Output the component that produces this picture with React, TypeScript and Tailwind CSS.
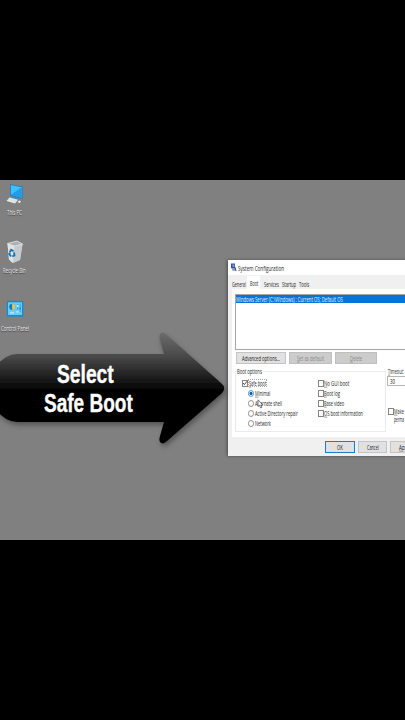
import { useLayoutEffect, useRef } from "react";

// Narrow label: the text is squeezed horizontally to the given width
function Label({ text, width, className = "", hotkey = false }: { text: string; width: number; className?: string; hotkey?: boolean }) {
  const ref = useRef<HTMLSpanElement>(null);
  useLayoutEffect(() => {
    const el = ref.current;
    if (el) el.style.transform = `translateY(0.6px) scaleX(${width / el.offsetWidth})`;
  }, [text, width]);
  return (
    <span className={`block shrink-0 whitespace-nowrap ${className}`} style={{ width }}>
      <span
        ref={ref}
        className={`inline-block origin-left align-top ${hotkey ? "first-letter:underline first-letter:decoration-[#999]" : ""}`}
      >
        {text}
      </span>
    </span>
  );
}

function Check({ text, width, checked = false }: { text: string; width: number; checked?: boolean }) {
  return (
    <div className="flex h-[10px] items-center">
      <span className="flex h-[7px] w-[6px] shrink-0 items-center justify-center border border-[#858585] bg-white">
        {checked && (
          <svg viewBox="0 0 6 6" className="h-[6px] w-[6px] shrink-0" fill="none" stroke="#222" strokeWidth="0.8">
            <path d="M1 3 L2.4 4.6 L5 1.2" />
          </svg>
        )}
      </span>
      <span className={checked ? "flex h-[8px] items-center border border-dotted border-[#aaa]" : "flex items-center"}>
        <Label text={text} width={width} hotkey />
      </span>
    </div>
  );
}

function Radio({ text, width, checked = false }: { text: string; width: number; checked?: boolean }) {
  return (
    <div className="flex h-[10px] items-center gap-[1px]">
      <svg viewBox="0 0 6 7" className="h-[7px] w-[6px] shrink-0">
        <ellipse cx="3" cy="3.5" rx="2.6" ry="3" fill="white" stroke={checked ? "#1275c7" : "#666"} strokeWidth="0.7" />
        {checked && <ellipse cx="3" cy="3.5" rx="1.5" ry="1.8" fill="#075fac" />}
      </svg>
      <Label text={text} width={width} hotkey={text === "Minimal"} />
    </div>
  );
}

function Arrow() {
  return (
    <svg viewBox="0 0 235 130" className="absolute top-[325px] left-0 h-[130px] w-[235px]">
      <defs>
        <linearGradient id="body" x1="0" y1="8" x2="0" y2="119" gradientUnits="userSpaceOnUse">
          <stop offset="0" stopColor="#6c6c6c" />
          <stop offset="0.2" stopColor="#4b4b4b" />
          <stop offset="0.49" stopColor="#090909" />
          <stop offset="0.53" stopColor="#000" />
        </linearGradient>
        <filter id="shadow" x="-10%" y="-10%" width="125%" height="125%">
          <feDropShadow dx="1.5" dy="3" stdDeviation="2.5" floodColor="#000" floodOpacity="0.35" />
        </filter>
      </defs>
      <path
        d="M17 29 H164 L159.5 13 Q158.8 8.5 162 7.8 Q164 7.5 167 10 L221.5 58.5 Q227 63 221.5 68.5 L167 116 Q163 120 160.5 117.5 Q158.5 115.5 160 111 L164 97 H17 Q6 97 -4 85 V41 Q6 29 17 29Z"
        fill="url(#body)"
        filter="url(#shadow)"
      />
    </svg>
  );
}

function PcIcon() {
  return (
    <svg viewBox="0 0 20 23" className="h-[23px] w-[20px]">
      <path d="M5 1 L17.5 3.5 V16 L5 12.5Z" fill="#137fc6" />
      <path d="M5.8 2 L16.8 4.2 V14.8 L5.8 11.7Z" fill="#43bdfb" />
      <path d="M16.8 4.2 L6 11.7 L16.8 14.8Z" fill="#219de8" />
      <path d="M8.5 13.5 L12 14.4 L14.2 17 L7 15.7Z" fill="#3b91bf" />
      <path d="M4.5 14.5 L13 16.7 L10 20.5 L1.5 18Z" fill="#e2e8eb" />
      <path d="M3.2 16.2 L11.5 18.5" stroke="#c3ccd0" strokeWidth="0.4" />
      <path d="M14 17.5 L16 18.2 L14.7 19.9 L12.7 19.2Z" fill="#edf1f3" />
    </svg>
  );
}

function BinIcon() {
  return (
    <svg viewBox="0 0 18 24" className="h-[24px] w-[18px]">
      <path d="M1.5 3.5 L11 1 L16.5 4 L14 20 L6.5 23 L3 19.5Z" fill="#d0d4d6" />
      <path d="M1.5 3.5 L8.5 6 L7 23 L3 19.5Z" fill="#e0e2e3" />
      <path d="M8.5 6 L16.5 4 L14 20 L7 23Z" fill="#c8cbcd" />
      <path d="M1.5 3.5 L11 1 L16.5 4 L8.5 6Z" fill="#aab0b3" stroke="#e9e9e9" strokeWidth="0.7" />
      <g fill="none" stroke="#1677bd" strokeWidth="1.9">
        <path d="M3.8 12.3 L5.1 9.8 L7.6 11.2" />
        <path d="M8 12.4 L8.5 15.5 L6.3 16.3" />
        <path d="M5.1 16.5 L3.2 14 L4 12.8" />
      </g>
    </svg>
  );
}

function PanelIcon() {
  return (
    <svg viewBox="0 0 18 18" className="h-[18px] w-[18px]">
      <rect x="0.7" y="0.8" width="16.6" height="15.8" fill="#168ad0" />
      <rect x="2" y="2.3" width="14" height="12.7" fill="#66cdf6" />
      <circle cx="6.2" cy="6.8" r="3.1" fill="#1680be" />
      <path d="M6.2 6.8 V3.7 A3.1 3.1 0 0 1 6.2 9.9Z" fill="#e6c55c" />
      <path d="M11.7 4 V10 M14.2 3.5 V12" stroke="#2b94cf" strokeWidth="0.8" />
      <path d="M4 12.8 H8 M10.2 11.8 H13" stroke="#bfeaff" strokeWidth="1.2" />
      <circle cx="11.7" cy="6" r="0.9" fill="#d9f3ff" />
      <circle cx="14.2" cy="8.5" r="0.8" fill="#1680be" />
    </svg>
  );
}

const button = "flex h-[12px] shrink-0 items-center justify-center border";
const normal = "border-[#c4c4c4] bg-[#e1e1e1]";
const disabled = "border-[#bfbfbf] bg-[#cccccc] text-[#8a8a8a]";

function ConfigWindow() {
  return (
    <div className="absolute top-[260px] left-[228px] flex h-[196px] w-[177px] flex-col overflow-hidden bg-[#f0f0f0] text-[7px] leading-[8px] text-[#1c1c1c]">
      <div className="flex h-[15px] shrink-0 items-center gap-px bg-white pl-[2px]">
        <svg viewBox="0 0 7 9" className="h-[9px] w-[7px]">
          <path d="M1 0.5 H5 V5.2 H1Z" fill="#3452a4" />
          <path d="M2.5 1.5 H4.3 V3.8 H2.5Z" fill="#8fa6dc" />
          <path d="M1.5 5 L6 5 V7.7 H2.5Z" fill="#8c9cb8" />
          <path d="M5 4 L6 8" stroke="#243b79" strokeWidth="0.8" />
        </svg>
        <Label text="System Configuration" width={46} />
      </div>
      <div className="flex h-[14px] shrink-0 items-end pl-[3px]">
        <span className="flex h-[10px] items-center pl-[1px]"><Label text="General" width={14} /></span>
        <span className="ml-px flex h-[13px] w-[13px] items-center justify-center bg-white"><Label text="Boot" width={8} /></span>
        <span className="flex h-[10px] items-center gap-[3px] pl-[4px]">
          <Label text="Services" width={15} />
          <Label text="Startup" width={14} />
          <Label text="Tools" width={10} />
        </span>
      </div>

      <div className="ml-[4px] flex h-[148px] shrink-0 flex-col bg-white pt-[5px] pl-[3px]">
        <div className="h-[56px] shrink-0 border border-r-0 border-[#a5a5a5] bg-white">
          <div className="flex h-[8px] items-center bg-[#0875d6] text-[#e6f3ff]">
            <Label text="Windows Server (C:\Windows) : Current OS; Default OS" width={107} className="text-[6.5px]" />
          </div>
        </div>
        <div className="mt-[2px] flex shrink-0 gap-[3px] pl-px">
          <div className={`${button} ${normal} w-[50px]`}><Label text="Advanced options..." width={38} /></div>
          <div className={`${button} ${disabled} w-[43px]`}><Label text="Set as default" width={27} hotkey /></div>
          <div className={`${button} ${disabled} w-[42px]`}><Label text="Delete" width={12} hotkey /></div>
        </div>
        <div className="mt-[3px] flex">
          <fieldset className="h-[65px] w-[151px] shrink-0 border border-[#ebebeb]">
            <legend className="ml-px h-[8px] pr-px">
              <Label text="Boot options" width={25} />
            </legend>
            <div className="flex pt-[3px] pl-[6px]">
              <div className="w-[76px] shrink-0">
                <Check text="Safe boot" width={17} checked />
                <div className="pl-[6px]">
                  <Radio text="Minimal" width={15} checked />
                  <Radio text="Alternate shell" width={27} />
                  <Radio text="Active Directory repair" width={43} />
                  <Radio text="Network" width={16} />
                </div>
              </div>
              <div>
                <Check text="No GUI boot" width={25} />
                <Check text="Boot log" width={16} />
                <Check text="Base video" width={20} />
                <Check text="OS boot information" width={39} />
              </div>
            </div>
          </fieldset>
          <div className="ml-px shrink-0">
            <div className="pl-px"><Label text="Timeout:" width={16} hotkey /></div>
            <div className="mt-px flex h-[10px] w-[30px] items-center border border-[#b5b5b5] pl-[2px]"><Label text="30" width={5} /></div>
            <div className="mt-[20px] pl-px">
              <Check text="Make" width={10} />
              <div className="-mt-px pl-[6px]"><Label text="perma" width={10} className="leading-[7px]" /></div>
            </div>
          </div>
        </div>
      </div>

      <div className="flex shrink-0 gap-[3px] pt-[4px] pl-[97px]">
        <div className={`${button} w-[30px] border-[#2879bc] bg-[#e1e1e1]`}><Label text="OK" width={6} /></div>
        <div className={`${button} ${normal} w-[29px]`}><Label text="Cancel" width={12} /></div>
        <div className={`${button} ${normal} w-[28px] justify-start pl-[8px]`}><Label text="Ap" width={6} hotkey /></div>
      </div>
    </div>
  );
}

export default function App() {
  return (
    <div className="relative flex h-[720px] w-[405px] flex-col justify-center overflow-hidden bg-black font-['Open_Sans','Noto_Sans',sans-serif]">
      <div className="h-[360px] bg-[#808080]" />

      <div className="absolute top-[183px] left-0 flex w-[29px] flex-col items-center text-[7px] leading-[8px] text-[#eeeeee] [text-shadow:0_1px_1px_#333]">
        <div className="flex h-[57px] flex-col items-center gap-[2px]">
          <PcIcon />
          <Label text="This PC" width={15} />
        </div>
        <div className="flex h-[60px] flex-col items-center gap-[2px]">
          <BinIcon />
          <Label text="Recycle Bin" width={23} />
        </div>
        <div className="flex flex-col items-center gap-[6px]">
          <PanelIcon />
          <Label text="Control Panel" width={28} />
        </div>
      </div>

      <div className="absolute top-[260px] left-[228px] h-[196px] w-[190px] shadow-[-1px_0_3px_rgba(0,0,0,0.4)]" />
      <ConfigWindow />
      <Arrow />
      <div className="absolute top-[359px] left-[43px] flex w-[90px] flex-col items-center font-['Liberation_Sans',sans-serif] text-[25px] leading-[29px] font-bold text-white [-webkit-text-stroke:0.4px_white]">
        <Label text="Select" width={57} className="-ml-[5px]" />
        <Label text="Safe Boot" width={89} />
      </div>

      <svg viewBox="0 0 7 10" className="absolute top-[399px] left-[257px] h-[10px] w-[7px]">
        <path d="M1 0.8 V7.5 L2.5 6.3 L3.6 9 L4.8 8.5 L3.8 6 H5.8Z" fill="white" stroke="#222" strokeWidth="0.6" />
      </svg>
    </div>
  );
}
